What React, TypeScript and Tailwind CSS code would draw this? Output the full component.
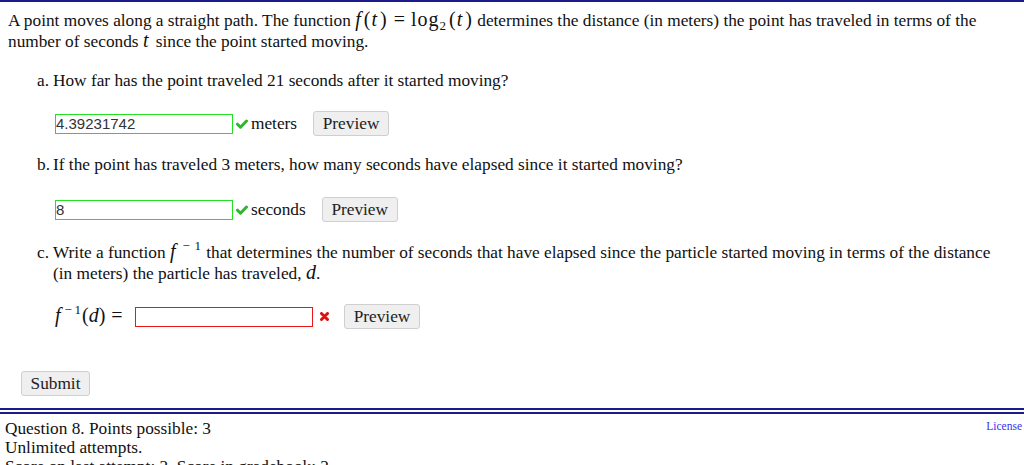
import React from "react";

const serif = "font-['Liberation_Serif','Times_New_Roman',serif]";

function Check() {
  return (
    <svg width="12" height="10" viewBox="0 0 12 10" className="mx-[3px]">
      <path d="M1.5 5.2 L4.5 8.2 L10.5 2" fill="none" stroke="#2fb52f" strokeWidth="3" strokeLinejoin="round" strokeLinecap="round" />
    </svg>
  );
}

function Cross() {
  return (
    <svg width="9" height="9" viewBox="0 0 9 9">
      <path d="M1.5 1.5 L7.5 7.5 M7.5 1.5 L1.5 7.5" stroke="#e01010" strokeWidth="3" strokeLinecap="round" />
    </svg>
  );
}

function PreviewButton() {
  return (
    <button
      type="button"
      className={`${serif} h-[25px] w-[76px] rounded-[3px] border border-[#cfcfcf] bg-[#efefef] text-[17.3px] leading-none text-[#222]`}
    >
      Preview
    </button>
  );
}

function AnswerBox({ value, border }: { value: string; border: string }) {
  return (
    <div
      className={`flex h-[20px] w-[178px] items-center border ${border} font-['Liberation_Sans',Arial,sans-serif] text-[15px] leading-none text-[#333]`}
    >
      {value}
    </div>
  );
}

// MathJax-like inline math: a bit larger than the body text, without growing the line
function M({ children }: { children: React.ReactNode }) {
  return <span className="whitespace-nowrap text-[20px] leading-[0] tracking-[1px]">{children}</span>;
}

function I({ children }: { children: React.ReactNode }) {
  return <span className="pr-[2px] italic">{children}</span>;
}

function Inv() {
  return (
    <span className="relative -top-[8px] ml-[4px] text-[13px] leading-[0]">−&thinsp;1</span>
  );
}

export default function App() {
  return (
    <div className={`${serif} min-h-[465px] w-[1024px] overflow-hidden bg-white text-[17.3px] leading-[21px] text-[#111]`}>
      <div className="h-[2px] bg-[#1b1b8c]" />

      <div className="px-2 pt-[8px]">
        A point moves along a straight path. The function{" "}
        <M>
          <I>f</I>(<I>t</I>)<span className="ml-[6px] mr-[5px]">=</span>log
          <span className="relative top-[4px] text-[13px] leading-[0]">2</span>
          <span className="ml-[2px]">(</span>
          <I>t</I>)
        </M>{" "}
        determines the distance (in meters) the point has traveled in terms of the number of seconds{" "}
        <M>
          <I>t</I>
        </M>{" "}
        since the point started moving.
      </div>

      <div className="mt-[18px] flex pl-[37px]">
        <span className="w-[16px] shrink-0">a.</span>
        <span>How far has the point traveled 21 seconds after it started moving?</span>
      </div>
      <div className="mt-[20px] flex h-[25px] items-center pl-[55px]">
        <AnswerBox value="4.39231742" border="border-[#22e022]" />
        <Check />
        <span>meters</span>
        <div className="ml-[16px]">
          <PreviewButton />
        </div>
      </div>

      <div className="mt-[18px] flex pl-[37px]">
        <span className="w-[16px] shrink-0">b.</span>
        <span>If the point has traveled 3 meters, how many seconds have elapsed since it started moving?</span>
      </div>
      <div className="mt-[22px] flex h-[25px] items-center pl-[55px]">
        <AnswerBox value="8" border="border-[#22e022]" />
        <Check />
        <span>seconds</span>
        <div className="ml-[16px]">
          <PreviewButton />
        </div>
      </div>

      <div className="mt-[20px] flex pl-[37px] pr-4">
        <span className="w-[16px] shrink-0">c.</span>
        <span>
          Write a function{" "}
          <M>
            <I>f</I>
            <Inv />
          </M>{" "}
          that determines the number of seconds that have elapsed since the particle started moving in terms of the
          distance (in meters) the particle has traveled,{" "}
          <span className="text-[20px] leading-[0] italic">d</span>.
        </span>
      </div>
      <div className="mt-[20px] flex h-[25px] items-center pl-[55px]">
        <span className="w-[80px] whitespace-nowrap text-[20px] leading-[0]">
          <span className="italic">f</span>
          <Inv />
          <span className="ml-[1px]">(</span>
          <span className="italic">d</span>)<span className="ml-[6px]">=</span>
        </span>
        <AnswerBox value="" border="border-[#e81818]" />
        <div className="ml-[7px] flex w-[9px] items-center">
          <Cross />
        </div>
        <div className="ml-[15px]">
          <PreviewButton />
        </div>
      </div>

      <div className="mt-[42px] flex h-[25px] pl-[21px]">
        <button
          type="button"
          className={`${serif} h-[25px] w-[69px] rounded-[3px] border border-[#cfcfcf] bg-[#efefef] text-[17.3px] leading-none text-[#222]`}
        >
          Submit
        </button>
      </div>

      <div className="mt-[12px] h-[2px] bg-[#1b1b8c]" />
      <div className="mt-[2px] h-[2px] bg-[#1b1b8c]" />

      <div className="flex justify-between pl-[5px] pr-[2px] pt-[5px]">
        <div className="leading-[19px]">
          <div>Question 8. Points possible: 3</div>
          <div>Unlimited attempts.</div>
          <div>Score on last attempt: 2. Score in gradebook: 2</div>
        </div>
        <div className="pt-[1px] text-[11.5px] leading-[13px] text-[#3333ee]">License</div>
      </div>
    </div>
  );
}
